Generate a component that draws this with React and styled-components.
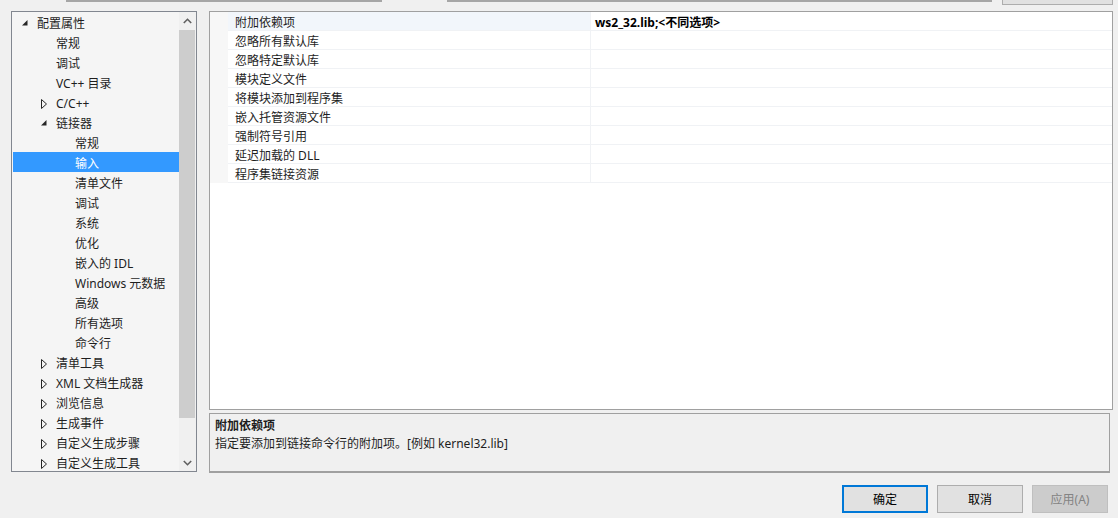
import React from "react";
import styled, { createGlobalStyle } from "styled-components";

const GlobalStyle = createGlobalStyle`
  html, body { margin: 0; padding: 0; background: #f0f0f0; }
  * { box-sizing: border-box; }
  #root { width: 1118px; height: 518px; }
`;

const FONT = `"Noto Sans", "Noto Sans CJK SC", sans-serif`;

const Window = styled.div`
  width: 1118px;
  height: 518px;
  background: #f0f0f0;
  font-family: ${FONT};
  font-size: 12px;
  color: #000;
  display: flex;
  flex-direction: column;
  overflow: hidden;
`;

const TopStrip = styled.div`
  height: 11px;
  display: flex;
  align-items: flex-start;
`;

const EdgeLine = styled.div`
  margin-left: ${(p) => p.$gap}px;
  width: ${(p) => p.$w}px;
  height: 2px;
  border-bottom: 2px solid #a6a6a6;
`;

const EdgeBox = styled.div`
  margin-left: ${(p) => p.$gap}px;
  width: ${(p) => p.$w}px;
  height: 5px;
  background: #e1e1e1;
  border: 1px solid #adadad;
  border-top: none;
`;

const Main = styled.div`
  display: flex;
  padding: 0 5px 0 11px;
  gap: 12px;
`;

const TreePanel = styled.div`
  width: 186px;
  height: 461px;
  border: 1px solid #828790;
  background: #f5f5f5;
  display: flex;
`;

const TreeList = styled.div`
  flex: 1;
  overflow: hidden;
  padding-left: 1px;
`;

const TreeRow = styled.div`
  height: 20px;
  display: flex;
  align-items: flex-start;
  padding-left: ${(p) => 9 + p.$level * 19}px;
  background: ${(p) => (p.$selected ? "#3399ff" : "transparent")};
  color: ${(p) => (p.$selected ? "#fff" : "#1e1e1e")};
  white-space: nowrap;
  overflow: hidden;
`;

const TreeLabel = styled.span`
  padding-top: 4px;
  line-height: 16px;
`;

const Toggle = styled.span`
  width: 15px;
  height: 20px;
  flex: none;
  display: flex;
  align-items: flex-start;
  justify-content: flex-start;
  padding-top: ${(p) => (p.$open ? 8 : 7)}px;
`;

const ScrollBar = styled.div`
  width: 17px;
  background: #f0f0f0;
  display: flex;
  flex-direction: column;
`;

const ScrollButton = styled.div`
  height: 17px;
  flex: none;
  display: flex;
  align-items: center;
  justify-content: center;
`;

const ScrollTrack = styled.div`
  flex: 1;
  padding-top: 1px;
`;

const Thumb = styled.div`
  margin: 0 1px 0 0;
  height: 388px;
  background: #cdcdcd;
`;

const RightCol = styled.div`
  width: 904px;
  display: flex;
  flex-direction: column;
  gap: 3px;
`;

const Grid = styled.div`
  height: 399px;
  border: 1px solid #a0a0a0;
  background: #fff;
`;

const GridRow = styled.div`
  display: grid;
  grid-template-columns: 18px 362px 1fr;
  height: 19px;
`;

const Gutter = styled.div`
  background: #f7f7f7;
  border-bottom: 1px solid #f7f7f7;
`;

const NameCell = styled.div`
  padding: 4px 0 0 7px;
  line-height: 14px;
  background: ${(p) => (p.$selected ? "#f2f6fb" : "#fff")};
  border-bottom: 1px solid #f0f2f5;
  color: #1e1e1e;
  white-space: nowrap;
  overflow: hidden;
`;

const ValueCell = styled.div`
  padding: 4px 0 0 4px;
  line-height: 14px;
  border-left: 1px solid #f0f2f5;
  border-bottom: 1px solid #f0f2f5;
  font-weight: 700;
  white-space: nowrap;
  overflow: hidden;
`;

const Desc = styled.div`
  width: 901px;
  height: 60px;
  border: 1px solid #a0a0a0;
  border-bottom: 2px solid #a0a0a0;
  padding: 3px 5px 0;
  line-height: 18px;
  color: #1e1e1e;
`;

const DescTitle = styled.div`
  font-weight: 700;
`;

const ButtonBar = styled.div`
  display: flex;
  justify-content: flex-end;
  gap: 9px;
  margin-top: 12px;
  padding-right: 10px;
`;

const Button = styled.button`
  width: ${(p) => p.$w || 86}px;
  height: 28px;
  font-family: ${FONT};
  font-size: 12px;
  padding: 0;
  background: ${(p) => (p.disabled ? "#cccccc" : "#e1e1e1")};
  color: ${(p) => (p.disabled ? "#838383" : "#000")};
  border: ${(p) =>
    p.$default ? "2px solid #0078d7" : p.disabled ? "1px solid #bfbfbf" : "1px solid #adadad"};
`;

const OpenArrow = () => (
  <svg width="6" height="6" viewBox="0 0 6 6">
    <polygon points="5.5,0 5.5,5.5 0,5.5" fill="#262626" />
  </svg>
);

const ClosedArrow = () => (
  <svg width="6" height="10" viewBox="0 0 6 10">
    <polygon points="0.5,0.5 5.5,5 0.5,9.5" fill="none" stroke="#262626" strokeWidth="1" />
  </svg>
);

const Chevron = ({ down }) => (
  <svg width="9" height="6" viewBox="0 0 9 6">
    <polyline
      points={down ? "0.8,1 4.5,4.7 8.2,1" : "0.8,5 4.5,1.3 8.2,5"}
      fill="none"
      stroke="#606060"
      strokeWidth="1.6"
    />
  </svg>
);

const treeItems = [
  { label: "配置属性", level: 0, toggle: "open" },
  { label: "常规", level: 1 },
  { label: "调试", level: 1 },
  { label: "VC++ 目录", level: 1 },
  { label: "C/C++", level: 1, toggle: "closed" },
  { label: "链接器", level: 1, toggle: "open" },
  { label: "常规", level: 2 },
  { label: "输入", level: 2, selected: true },
  { label: "清单文件", level: 2 },
  { label: "调试", level: 2 },
  { label: "系统", level: 2 },
  { label: "优化", level: 2 },
  { label: "嵌入的 IDL", level: 2 },
  { label: "Windows 元数据", level: 2 },
  { label: "高级", level: 2 },
  { label: "所有选项", level: 2 },
  { label: "命令行", level: 2 },
  { label: "清单工具", level: 1, toggle: "closed" },
  { label: "XML 文档生成器", level: 1, toggle: "closed" },
  { label: "浏览信息", level: 1, toggle: "closed" },
  { label: "生成事件", level: 1, toggle: "closed" },
  { label: "自定义生成步骤", level: 1, toggle: "closed" },
  { label: "自定义生成工具", level: 1, toggle: "closed" },
];

const props = [
  { name: "附加依赖项", value: "ws2_32.lib;<不同选项>", selected: true },
  { name: "忽略所有默认库" },
  { name: "忽略特定默认库" },
  { name: "模块定义文件" },
  { name: "将模块添加到程序集" },
  { name: "嵌入托管资源文件" },
  { name: "强制符号引用" },
  { name: "延迟加载的 DLL" },
  { name: "程序集链接资源" },
];

export default function App() {
  return (
    <>
      <GlobalStyle />
      <Window>
        <TopStrip>
          <EdgeLine $gap={66} $w={316} />
          <EdgeLine $gap={65} $w={545} />
          <EdgeBox $gap={10} $w={111} />
        </TopStrip>
        <Main>
          <TreePanel>
            <TreeList>
              {treeItems.map((it, i) => (
                <TreeRow key={i} $level={it.level} $selected={it.selected}>
                  <Toggle $open={it.toggle === "open"}>
                    {it.toggle === "open" && <OpenArrow />}
                    {it.toggle === "closed" && <ClosedArrow />}
                  </Toggle>
                  <TreeLabel>{it.label}</TreeLabel>
                </TreeRow>
              ))}
            </TreeList>
            <ScrollBar>
              <ScrollButton>
                <Chevron />
              </ScrollButton>
              <ScrollTrack>
                <Thumb />
              </ScrollTrack>
              <ScrollButton>
                <Chevron down />
              </ScrollButton>
            </ScrollBar>
          </TreePanel>
          <RightCol>
            <Grid>
              {props.map((p, i) => (
                <GridRow key={i}>
                  <Gutter />
                  <NameCell $selected={p.selected}>{p.name}</NameCell>
                  <ValueCell>{p.value || ""}</ValueCell>
                </GridRow>
              ))}
            </Grid>
            <Desc>
              <DescTitle>附加依赖项</DescTitle>
              <div>指定要添加到链接命令行的附加项。[例如 kernel32.lib]</div>
            </Desc>
          </RightCol>
        </Main>
        <ButtonBar>
          <Button $default>确定</Button>
          <Button>取消</Button>
          <Button disabled $w={76}>应用(A)</Button>
        </ButtonBar>
      </Window>
    </>
  );
}
